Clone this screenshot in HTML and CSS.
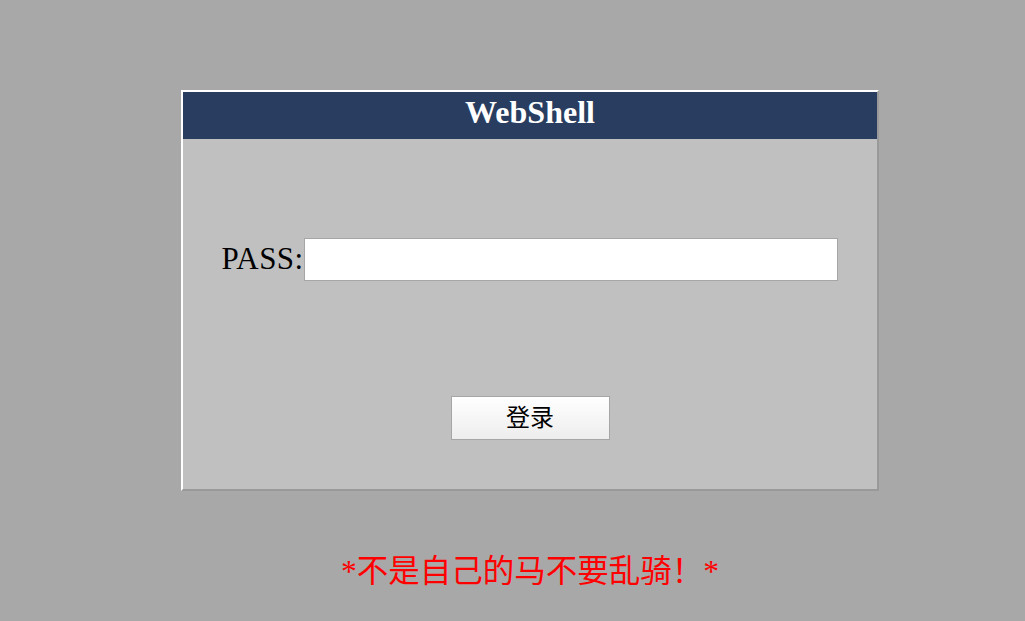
FILE: index.html
```html
<!DOCTYPE html>
<html>
<head>
<meta charset="utf-8">
<title>WebShell</title>
<link rel="stylesheet" href="styles.css">
</head>
<body>
<div class="wrap">
  <div class="box">
    <div class="head">WebShell</div>
    <div class="row">
      <label class="label" for="pass">PASS:</label>
      <input class="input" id="pass" type="password">
    </div>
    <div class="actions">
      <button class="btn" type="button">登录</button>
    </div>
  </div>
  <p class="warn">*不是自己的马不要乱骑！*</p>
</div>
</body>
</html>
```
FILE: styles.css
```css
html, body {
  margin: 0;
  padding: 0;
  background: #a8a8a8;
  font-family: "Liberation Serif", "Noto Sans CJK SC", serif;
}
.wrap {
  width: 698px;
  margin: 90px 0 0 181px;
}
.box {
  box-sizing: border-box;
  width: 698px;
  height: 401px;
  background: #c0c0c0;
  border-style: solid;
  border-width: 2px;
  border-color: #ffffff #999999 #999999 #ffffff;
  display: flex;
  flex-direction: column;
}
.head {
  height: 47px;
  background: #283d5f;
  color: #ffffff;
  font-weight: bold;
  font-size: 32px;
  line-height: 41px;
  text-align: center;
}
.row {
  margin-top: 99px;
  display: flex;
  justify-content: center;
  align-items: center;
  height: 43px;
}
.label {
  font-size: 31px;
  letter-spacing: 0.4px;
  color: #000;
  line-height: 43px;
  margin-top: -3px;
}
.input {
  box-sizing: border-box;
  width: 534px;
  height: 43px;
  margin: 0 0 0 1px;
  border: 1px solid #a6a6a6;
  background: #fff;
  padding: 0 6px;
  font-size: 20px;
  outline: none;
}
.actions {
  margin-top: 115px;
  display: flex;
  justify-content: center;
}
.btn {
  box-sizing: border-box;
  width: 159px;
  height: 44px;
  border: 1px solid #a6a6a6;
  background: linear-gradient(#ffffff, #ededed);
  font-family: "Liberation Serif", "Noto Sans CJK SC", serif;
  font-size: 24px;
  color: #000;
  padding: 0;
  line-height: 40px;
}
.warn {
  margin: 60px 0 0 0;
  text-align: center;
  color: #ff0000;
  font-size: 31.5px;
  line-height: 42px;
}
```
